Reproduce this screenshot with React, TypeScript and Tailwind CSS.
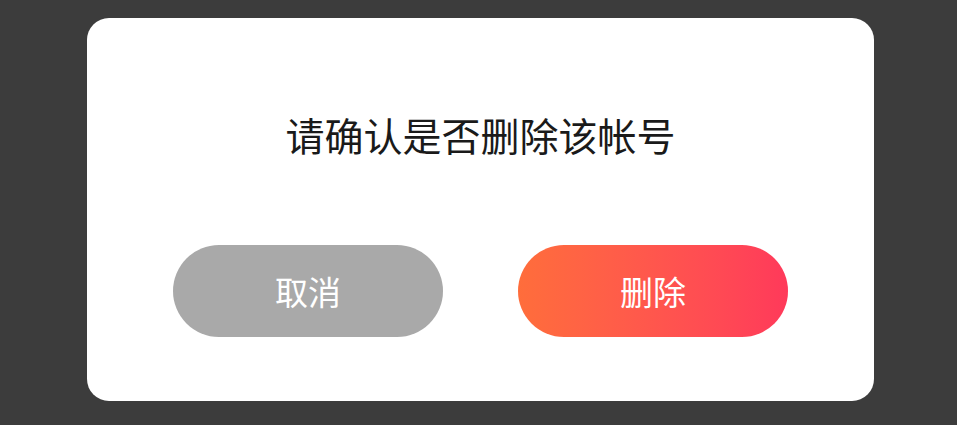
export default function App() {
  return (
    <div
      className="w-[957px] h-[425px] bg-[#3c3c3c] pt-[18px] pl-[87px]"
      style={{ fontFamily: '"Noto Sans CJK SC", "Noto Sans", sans-serif' }}
    >
      <div className="w-[787px] h-[383px] bg-white rounded-[22px] flex flex-col items-center pt-[97px]">
        <h1 className="text-[39px] leading-[39px] text-[#1a1a1a] font-normal">请确认是否删除该帐号</h1>
        <div className="mt-[91px] flex gap-[75px]">
          <button className="w-[270px] h-[92px] rounded-full bg-[#a9a9a9] text-white text-[33px] leading-none">
            取消
          </button>
          <button className="w-[270px] h-[92px] rounded-full bg-gradient-to-r from-[#ff6d3b] to-[#ff395a] text-white text-[33px] leading-none">
            删除
          </button>
        </div>
      </div>
    </div>
  )
}
